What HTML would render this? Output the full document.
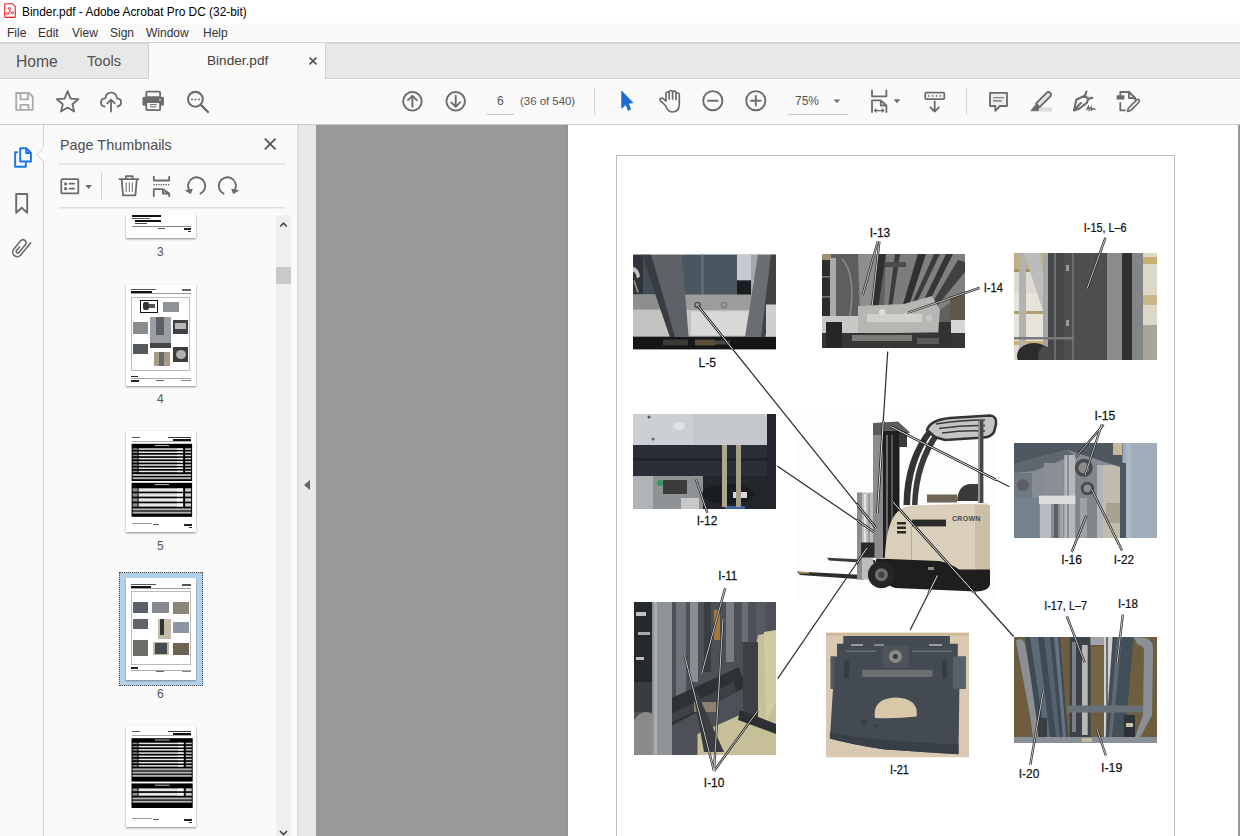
<!DOCTYPE html>
<html><head><meta charset="utf-8">
<style>
*{margin:0;padding:0;box-sizing:border-box}
html,body{width:1240px;height:836px;overflow:hidden;background:#fafafa;font-family:"Liberation Sans",sans-serif}
.a{position:absolute}
.t{position:absolute;white-space:nowrap;line-height:1}
svg{position:absolute;overflow:visible}
.tb{background:#000;background-image:repeating-linear-gradient(180deg,transparent 0,transparent 2px,rgba(255,255,255,.55) 2px,rgba(255,255,255,.55) 3px);border:1.5px solid #000}
</style></head><body>
<!-- title bar -->
<div class="a" style="left:0;top:0;width:1240px;height:23px;background:#fff"></div>
<svg style="left:4px;top:3px" width="12" height="15" viewBox="0 0 12 15"><path d="M0.7 1.3 Q0.7 0.7 1.3 0.7 H8.3 L11.3 3.7 V13.8 Q11.3 14.4 10.7 14.4 H1.3 Q0.7 14.4 0.7 13.8 Z" fill="#fff" stroke="#f21c1c" stroke-width="1.1"/><g fill="none" stroke="#f21c1c" stroke-width="0.95"><circle cx="5.6" cy="5.6" r="1.1"/><circle cx="3.4" cy="10.6" r="1.1"/><circle cx="8.5" cy="9.8" r="1.1"/><path d="M5.6 6.7 L5.7 8.6 L4.3 9.9 M5.7 8.6 L7.5 9.5"/></g></svg>
<div class="t" style="left:22px;top:7px;font-size:11.9px;color:#000">Binder.pdf - Adobe Acrobat Pro DC (32-bit)</div>
<!-- menu bar -->
<div class="a" style="left:0;top:23px;width:1240px;height:19px;background:#fafafa"></div>
<div class="t" style="left:7px;top:27px;font-size:12px;color:#333">File</div>
<div class="t" style="left:38px;top:27px;font-size:12px;color:#333">Edit</div>
<div class="t" style="left:72px;top:27px;font-size:12px;color:#333">View</div>
<div class="t" style="left:110px;top:27px;font-size:12px;color:#333">Sign</div>
<div class="t" style="left:146px;top:27px;font-size:12px;color:#333">Window</div>
<div class="t" style="left:203px;top:27px;font-size:12px;color:#333">Help</div>
<!-- tab bar -->
<div class="a" style="left:0;top:42px;width:1240px;height:37px;background:#e8e8e8;border-top:2px solid #d4d4d4;border-bottom:1px solid #cfcfcf"></div>
<div class="a" style="left:148px;top:43px;width:178px;height:36px;background:#fafafa;border-left:1px solid #d0d0d0;border-right:1px solid #d0d0d0"></div>
<div class="t" style="left:16px;top:53.5px;font-size:15.6px;color:#505050">Home</div>
<div class="t" style="left:87px;top:53.5px;font-size:14.6px;color:#505050">Tools</div>
<div class="t" style="left:207px;top:54px;font-size:13.6px;color:#404040">Binder.pdf</div>
<svg style="left:308.5px;top:57px" width="8" height="8" viewBox="0 0 8 8"><path d="M0.6 0.6L7.4 7.4M7.4 0.6L0.6 7.4" stroke="#555" stroke-width="1.7"/></svg>
<!-- toolbar -->
<div class="a" style="left:0;top:79px;width:1240px;height:46px;background:#fafafa;border-bottom:1px solid #cccccc"></div>


<!-- toolbar icons -->
<svg style="left:0;top:0" width="1240" height="125" viewBox="0 0 1240 125">
 <g fill="none" stroke="#6b6b6b" stroke-width="1.8" stroke-linejoin="round" stroke-linecap="round">
  <!-- save -->
  <path d="M16.2 93 H29 L32.8 96.8 V109.8 H16.2 Z M20.5 93 V99.3 H28 V93 M20.5 109.8 V104.8 H28.5 V109.8" stroke="#ababab"/>
  <!-- star -->
  <path d="M67.6 91.2 L70.6 98.6 L78.3 99.2 L72.4 104.3 L74.2 111.5 L67.6 107.6 L61 111.5 L62.8 104.3 L56.9 99.2 L64.6 98.6 Z"/>
  <!-- cloud -->
  <path d="M104.5 106.5 Q100.8 105.8 100.9 102.2 Q101.1 98.4 105.3 98.3 Q106 92.5 111.2 92.6 Q116.3 92.7 117 98.3 Q121 98.5 121.1 102.3 Q121 106 117.6 106.5"/>
  <path d="M111 111.5 V99.8 M107.3 103.4 L111 99.6 L114.7 103.4"/>
  <!-- search -->
  <circle cx="195.4" cy="99.3" r="7.4" stroke-width="2.1"/>
  <path d="M200.8 104.8 L208 112" stroke-width="2.4"/>
 </g>
 <g fill="#6b6b6b">
  <circle cx="192" cy="99.4" r="1"/><circle cx="195.5" cy="99.4" r="1"/><circle cx="199" cy="99.4" r="1"/>
  <!-- printer -->
  <rect x="142.5" y="96.8" width="21.4" height="9" rx="1.5"/>
 </g>
 <g fill="#fafafa" stroke="#6b6b6b" stroke-width="1.8" stroke-linejoin="round">
  <rect x="146.3" y="91.6" width="13.8" height="5.6" rx="1"/>
  <rect x="146.3" y="102.2" width="13.8" height="8" rx="1"/>
 </g>
 <path d="M150 104.6 H156.5 M150 106.8 H156.5" stroke="#6b6b6b" stroke-width="1"/>
 <rect x="159" y="99" width="2" height="1.6" fill="#bbb"/>
 <!-- nav circles -->
 <g fill="none" stroke="#6b6b6b" stroke-width="1.9" stroke-linecap="round" stroke-linejoin="round">
  <circle cx="412.4" cy="101.3" r="9.3"/>
  <path d="M412.4 106.8 V95.8 M408 100.2 L412.4 95.8 L416.8 100.2"/>
  <circle cx="455.7" cy="101.3" r="9.3"/>
  <path d="M455.7 95.8 V106.8 M451.3 102.4 L455.7 106.8 L460.1 102.4"/>
  <circle cx="712.8" cy="100.7" r="9.6"/>
  <path d="M708 100.7 H717.6"/>
  <circle cx="755.8" cy="100.7" r="9.6"/>
  <path d="M751 100.7 H760.6 M755.8 95.9 V105.5"/>
 </g>
 <!-- page field -->
 <path d="M486.7 114.3 H514.2" stroke="#c4c4c4" stroke-width="1"/>
 <path d="M594.6 88 V114.6" stroke="#d0d0d0" stroke-width="1"/>
 <path d="M788 114.3 H848.5" stroke="#c4c4c4" stroke-width="1"/>
 <path d="M833.6 99.4 H840.2 L836.9 103 Z" fill="#6b6b6b"/>
 <path d="M893.7 99.3 H900.3 L897 103.2 Z" fill="#6b6b6b"/>
 <path d="M966.5 88 V114.6" stroke="#d0d0d0" stroke-width="1"/>
 <!-- arrow cursor -->
 <path d="M621.7 91.1 L633 102.7 L628.4 103.3 L630.6 109.3 L628.4 110.5 L625.9 104.6 L621.7 108.2 Z" fill="#1b6ccf" stroke="#1b6ccf" stroke-width="0.8" stroke-linejoin="round"/>
 <!-- hand -->
 <path d="M665.5 105.5 L660.5 100.8 Q659.2 99.2 660.8 98.3 Q662.1 97.7 663.5 98.9 L666 101 V93.7 Q666 92 667.6 92 Q669.2 92 669.2 93.7 V99 V92.2 Q669.2 90.5 670.9 90.5 Q672.6 90.5 672.6 92.2 V99 V92.8 Q672.6 91.2 674.3 91.2 Q676 91.2 676 92.8 V99.5 V94.5 Q676 93 677.6 93 Q679.3 93 679.3 94.5 V104 Q679.3 112 672 112 Q668 112 665.5 105.5 Z" fill="none" stroke="#6b6b6b" stroke-width="1.7" stroke-linejoin="round"/>
 <!-- fit page -->
 <g fill="none" stroke="#6b6b6b" stroke-width="1.8" stroke-linecap="round" stroke-linejoin="round">
  <path d="M872 90.5 V96.3 H886.4 V90.5"/>
  <path d="M872 112 V100.3 H880.8 L886.4 105.5 V112 M880.8 100.3 V105.5 H886.4"/>
 </g>
 <path d="M874.5 110.6 H883.8 M876.5 108.8 L874.5 110.6 L876.5 112.4 M881.8 108.8 L883.8 110.6 L881.8 112.4" fill="none" stroke="#6b6b6b" stroke-width="1.2"/>
 <!-- scroll mode -->
 <rect x="925.3" y="92.6" width="19" height="6.6" rx="1.2" fill="none" stroke="#6b6b6b" stroke-width="1.8"/>
 <g fill="#6b6b6b"><circle cx="928.7" cy="95.9" r="0.9"/><circle cx="932.6" cy="95.9" r="0.9"/><circle cx="936.5" cy="95.9" r="0.9"/><circle cx="940.4" cy="95.9" r="0.9"/></g>
 <path d="M934.7 101.5 V111.5 M930.5 107.3 L934.7 111.5 L938.9 107.3" fill="none" stroke="#6b6b6b" stroke-width="1.8" stroke-linecap="round" stroke-linejoin="round"/>
 <!-- comment -->
 <path d="M990 92.8 H1007 V106 H1000 L995.3 110.8 V106 H990 Z" fill="#eeeeee" stroke="#6b6b6b" stroke-width="1.8" stroke-linejoin="round"/>
 <path d="M993 97.7 H1004 M993 100.9 H1002" stroke="#6b6b6b" stroke-width="1.1"/>
 <!-- highlighter -->
 <rect x="1036.8" y="107.2" width="15.2" height="4.5" fill="#dddddd"/>
 <path d="M1036 103.5 L1046.6 92.9 Q1048.4 91.1 1050.2 92.9 Q1052 94.7 1050.2 96.5 L1039.6 107.1 Z" fill="#e6e6e6" stroke="#6b6b6b" stroke-width="1.8" stroke-linejoin="round"/>
 <path d="M1036.5 104 L1031 110.7 H1038 L1039 107" fill="#6b6b6b" stroke="#6b6b6b" stroke-width="1" stroke-linejoin="round"/>
 <!-- pen -->
 <path d="M1085.5 93.5 L1093.5 98 L1088.5 100.5 Z" fill="#dddddd"/>
 <path d="M1074 110.5 L1076.3 99.8 L1084.7 95.8 L1088.2 99 L1086.8 102.8 L1079.5 108.5 Z" fill="none" stroke="#6b6b6b" stroke-width="2.1" stroke-linejoin="round"/>
 <path d="M1084.7 95.8 L1086.5 91.5 M1088.2 99 L1092.5 97.8 M1074.5 110 L1080.2 103.5" fill="none" stroke="#6b6b6b" stroke-width="2" stroke-linecap="round"/>
 <circle cx="1081" cy="103" r="1.1" fill="#6b6b6b"/>
 <path d="M1086.5 110.2 L1088.5 106.5 L1089.2 110 L1091 107 L1091.5 110 L1093 108.5 L1095.5 109.5" fill="none" stroke="#6b6b6b" stroke-width="1.4"/>
 <!-- edit pdf -->
 <g fill="none" stroke="#6b6b6b" stroke-width="1.8" stroke-linejoin="round" stroke-linecap="round">
  <path d="M1120.3 95 V92 H1129 L1135.2 98 V99.5 M1129 92 V98 H1135.2"/>
  <path d="M1120.3 103 V110.3 H1125"/>
 </g>
 <rect x="1116.6" y="95.3" width="7.8" height="4.2" fill="#6b6b6b"/>
 <path d="M1127.5 111.5 L1128.3 108.2 L1136.6 99.9 Q1137.8 98.7 1139 99.9 Q1140.2 101.1 1139 102.3 L1130.7 110.6 Z" fill="#eeeeee" stroke="#6b6b6b" stroke-width="1.6" stroke-linejoin="round"/>
</svg>
<div class="t" style="left:497px;top:95px;font-size:12px;color:#555">6</div>
<div class="t" style="left:520px;top:95.5px;font-size:11.4px;color:#555">(36 of 540)</div>
<div class="t" style="left:795px;top:95px;font-size:12px;color:#555">75%</div>

<!-- nav rail -->
<div class="a" style="left:0;top:125px;width:44px;height:711px;background:#fafafa"></div>
<!-- thumbnails panel -->
<div class="a" style="left:44px;top:125px;width:253px;height:711px;background:#fafafa"></div>
<div class="a" style="left:297px;top:125px;width:2px;height:711px;background:#dcdcdc"></div>
<div class="a" style="left:299px;top:125px;width:17px;height:711px;background:#e9e9e9"></div>
<svg style="left:304px;top:480px" width="6" height="10" viewBox="0 0 6 10"><path d="M6 0 L0 5 L6 10Z" fill="#666"/></svg>

<!-- nav rail icons -->
<svg style="left:0;top:125px" width="316" height="100" viewBox="0 125 316 100">
 <path d="M43.5 125 V147.5 L36.8 154.7 L43.5 161.8 V836" fill="none" stroke="#d2d2d2" stroke-width="1"/>
 <g fill="none" stroke="#1473e6" stroke-width="1.9" stroke-linejoin="round" stroke-linecap="round">
  <path d="M17.2 152.2 H15.2 V166.8 H25.8 V163"/>
  <path d="M20.2 148.2 H26.2 L30.9 152.8 V161.5 H20.2 Z M26.2 148.2 V153 H30.9"/>
 </g>
 <path d="M16.2 194 H27.2 V212.8 L21.7 207.8 L16.2 212.8 Z" fill="none" stroke="#6b6b6b" stroke-width="1.9" stroke-linejoin="round"/>
 <!-- header -->
 <path d="M264.8 138.6 L275.6 149.4 M275.6 138.6 L264.8 149.4" stroke="#555" stroke-width="1.8"/>
 <path d="M59 164 H285 M59 207.8 H285" stroke="#d4d4d4" stroke-width="1"/>
 <!-- panel tools -->
 <g fill="none" stroke="#6b6b6b" stroke-width="1.8" stroke-linejoin="round" stroke-linecap="round">
  <rect x="61.3" y="179.2" width="17" height="14.2" rx="1"/>
  <path d="M69.6 183.7 H74.1 M69.6 188.7 H74.1"/>
  <path d="M119.3 179.1 H138.5 M126 179 V176.2 H132.6 V179 M121.6 179.2 L123 195.4 H135.4 L136.8 179.2"/>
  <path d="M153.8 176.6 V180.5 H169.2 V176.6"/>
  <path d="M153.8 196.2 V189.2 H162.9 L169.2 193.5 V196.2 M162.9 189.2 V193.5 H169.2"/>
  <path d="M200.4 193.6 A8.6 8.6 0 1 0 188.8 189.5" stroke-width="1.9"/>
  <path d="M223.6 193.6 A8.6 8.6 0 1 1 235.2 189.5" stroke-width="1.9"/>
 </g>
 <path d="M126.2 182.5 V192 M129.3 182.5 V192 M132.3 182.5 V192" stroke="#6b6b6b" stroke-width="1"/>
 <g fill="#6b6b6b">
  <circle cx="65.6" cy="183.8" r="1.6"/><circle cx="65.6" cy="188.7" r="1.6"/>
  <path d="M85.4 184.9 H91.9 L88.65 188.9 Z"/>
  <rect x="153.4" y="184" width="1.4" height="1.4"/><rect x="155.8" y="184" width="1.4" height="1.4"/><rect x="158.2" y="184" width="1.4" height="1.4"/><rect x="160.6" y="184" width="1.4" height="1.4"/><rect x="163" y="184" width="1.4" height="1.4"/><rect x="165.4" y="184" width="1.4" height="1.4"/><rect x="167.8" y="184" width="1.4" height="1.4"/>
  <path d="M184.7 190.2 L192.8 188.8 L190.8 194.3 Z"/>
  <path d="M239.3 190.2 L231.2 188.8 L233.2 194.3 Z"/>
 </g>
 <path d="M101.6 172.2 V199.4" stroke="#d0d0d0" stroke-width="1"/>
</svg>
<svg style="left:0;top:230px" width="44" height="40" viewBox="0 230 44 40">
 <g transform="translate(22 246.3) rotate(-51) scale(0.84) translate(-21.5 -248)" fill="none" stroke="#6b6b6b" stroke-width="1.9" stroke-linecap="round">
  <path d="M19 246.2 H13.5 A1.8 1.8 0 0 0 13.5 249.8 H25.5 A3.6 3.6 0 0 0 25.5 242.6 H12.5 A5.4 5.4 0 0 0 12.5 253.4 H31"/>
 </g>
</svg>
<div class="t" style="left:60px;top:138px;font-size:14.4px;color:#4b4b4b">Page Thumbnails</div>


<!-- thumbnails -->
<div class="a" style="left:44px;top:215px;width:232px;height:621px;overflow:hidden">
 <!-- page 3 (clipped) -->
 <div class="a" style="left:82px;top:-78px;width:70px;height:101px;background:#fff;box-shadow:0 1px 2px rgba(0,0,0,.45)">
  <div class="a" style="left:6px;top:76px;width:25px;height:1px;background:#333"></div>
  <div class="a" style="left:6px;top:78px;width:29px;height:2px;background:#111"></div>
  <div class="a" style="left:6px;top:81px;width:18px;height:1px;background:#555"></div>
  <div class="a" style="left:9px;top:83px;width:26px;height:2px;background:#111"></div>
  <div class="a" style="left:9px;top:86px;width:12px;height:1px;background:#444"></div>
  <div class="a" style="left:6px;top:89px;width:59px;height:1px;background:#888"></div>
  <div class="a" style="left:32px;top:91px;width:7px;height:1px;background:#555"></div>
  <div class="a" style="left:58px;top:91px;width:7px;height:2px;background:#222"></div>
  <div class="a" style="left:62px;top:94px;width:3px;height:1px;background:#333"></div>
 </div>
 <!-- page 4 -->
 <div class="a" style="left:82px;top:69.6px;width:70px;height:101px;background:#fff;box-shadow:0 1px 2px rgba(0,0,0,.45)">
  <div class="a" style="left:5px;top:4.6px;width:25px;height:1px;background:#555"></div>
  <div class="a" style="left:5px;top:6.6px;width:21px;height:1.5px;background:#111"></div>
  <div class="a" style="left:56px;top:4.6px;width:9px;height:2px;background:#666"></div>
  <div class="a" style="left:5px;top:8.8px;width:60px;height:1px;background:#999"></div>
  <div class="a" style="left:5.2px;top:12.5px;width:59.2px;height:73.7px;border:1px solid #bbb"></div>
  <div class="a" style="left:13.7px;top:15.1px;width:18.5px;height:13.2px;background:#fff;border:1.6px solid #111"><div class="a" style="left:2px;top:1.5px;width:6px;height:8px;background:#333;border-radius:2px"></div><div class="a" style="left:8px;top:3px;width:6px;height:4px;background:#555"></div></div>
  <div class="a" style="left:36.8px;top:17.8px;width:16.4px;height:9.8px;background:#8d949a"></div>
  <div class="a" style="left:6.5px;top:37.5px;width:15.8px;height:11.9px;background:#8a8c8e"></div>
  <div class="a" style="left:23.6px;top:32.2px;width:21px;height:31.6px;background:#9a9ea2"><div class="a" style="left:6px;top:0;width:8px;height:18px;background:#5a6066"></div><div class="a" style="left:0;top:26px;width:21px;height:5.6px;background:#444"></div></div>
  <div class="a" style="left:46.6px;top:35.5px;width:15.8px;height:13.9px;background:#3e4246"><div class="a" style="left:2px;top:3px;width:11px;height:6px;background:#b8b8b8"></div></div>
  <div class="a" style="left:6.5px;top:59.2px;width:15.8px;height:10.5px;background:#54585c"></div>
  <div class="a" style="left:28.2px;top:67.8px;width:15.8px;height:13.8px;background:#a89c86"><div class="a" style="left:5px;top:0;width:5px;height:13.8px;background:#6a6a6a"></div></div>
  <div class="a" style="left:46.6px;top:62.4px;width:15.8px;height:15.2px;background:#3c3c3c"><div class="a" style="left:3px;top:3px;width:10px;height:9px;border-radius:50%;background:#b0b0b0"></div></div>
  <div class="a" style="left:5px;top:91px;width:7px;height:1.5px;background:#222"></div>
  <div class="a" style="left:5px;top:93.5px;width:60px;height:1px;background:#aaa"></div>
  <div class="a" style="left:5px;top:95px;width:8px;height:2px;background:#222"></div>
  <div class="a" style="left:30px;top:95px;width:8px;height:1px;background:#666"></div>
  <div class="a" style="left:55px;top:95px;width:10px;height:1px;background:#888"></div>
 </div>
 <!-- page 5 -->
 <div class="a" style="left:82px;top:216px;width:70px;height:101px;background:#fff;box-shadow:0 1px 2px rgba(0,0,0,.45)">
  <div class="a" style="left:6px;top:6px;width:8px;height:1px;background:#555"></div>
  <div class="a" style="left:42px;top:6px;width:23px;height:1px;background:#333"></div>
  <div class="a" style="left:47px;top:8px;width:18px;height:2px;background:#111"></div>
  <div class="a" style="left:6px;top:10px;width:59px;height:1px;background:#aaa"></div>
  <div class="a" style="left:6px;top:92px;width:20px;height:1px;background:#999"></div>
  <div class="a" style="left:27px;top:93px;width:6px;height:1px;background:#555"></div>
  <div class="a" style="left:58px;top:93px;width:8px;height:2px;background:#222"></div>
  <div class="a" style="left:63px;top:96px;width:3px;height:1px;background:#333"></div>
 </div>
 <!-- page 6 selected -->
 <div class="a" style="left:75px;top:357px;width:84px;height:114px;background:#b3d1e8;border:1px dotted #444"></div>
 <div class="a" style="left:82px;top:363px;width:70px;height:102px;background:#fff;box-shadow:0 1px 2px rgba(0,0,0,.35)">
  <div class="a" style="left:5px;top:6px;width:25px;height:1px;background:#555"></div>
  <div class="a" style="left:5px;top:8px;width:20px;height:1.5px;background:#111"></div>
  <div class="a" style="left:56px;top:6px;width:9px;height:1.5px;background:#555"></div>
  <div class="a" style="left:5px;top:10px;width:60px;height:1px;background:#999"></div>
  <div class="a" style="left:5px;top:12.6px;width:59.5px;height:74.5px;border:1px solid #bbb"></div>
  <div class="a" style="left:6.6px;top:23.8px;width:15.6px;height:10.9px;background:#5a6068"></div>
  <div class="a" style="left:25.9px;top:23.8px;width:17px;height:10.9px;background:#858a90"></div>
  <div class="a" style="left:46.8px;top:23.8px;width:15.9px;height:12px;background:#88867a"></div>
  <div class="a" style="left:6.6px;top:40.6px;width:15.6px;height:10.9px;background:#5e646a"></div>
  <div class="a" style="left:31.7px;top:40.6px;width:13.4px;height:20px;background:#c4bca8"></div>
  <div class="a" style="left:34px;top:40.6px;width:4px;height:16px;background:#333"></div>
  <div class="a" style="left:46.8px;top:44px;width:15.9px;height:10.8px;background:#8a96a2"></div>
  <div class="a" style="left:6.6px;top:61.5px;width:15.6px;height:16.8px;background:#6c6e68"></div>
  <div class="a" style="left:27.2px;top:64px;width:15.8px;height:13.4px;background:#c8b89a"><div class="a" style="left:2px;top:1px;width:12px;height:11px;background:#434a54"></div></div>
  <div class="a" style="left:46.8px;top:64.9px;width:15.9px;height:12.5px;background:#6e6250"></div>
  <div class="a" style="left:5px;top:89px;width:7px;height:2px;background:#222"></div>
  <div class="a" style="left:5px;top:92px;width:60px;height:1px;background:#aaa"></div>
  <div class="a" style="left:30px;top:93px;width:8px;height:1px;background:#666"></div>
  <div class="a" style="left:56px;top:93px;width:9px;height:1px;background:#888"></div>
 </div>
 <!-- page 7 -->
 <div class="a" style="left:82px;top:511px;width:70px;height:101px;background:#fff;box-shadow:0 1px 2px rgba(0,0,0,.45)">
  <div class="a" style="left:6px;top:5px;width:8px;height:1px;background:#555"></div>
  <div class="a" style="left:42px;top:5px;width:23px;height:1px;background:#333"></div>
  <div class="a" style="left:47px;top:7px;width:18px;height:2px;background:#111"></div>
  <div class="a" style="left:6px;top:9px;width:59px;height:1px;background:#aaa"></div>
  <div class="a" style="left:6px;top:92px;width:20px;height:1px;background:#999"></div>
  <div class="a" style="left:27px;top:93px;width:6px;height:1px;background:#555"></div>
  <div class="a" style="left:58px;top:93px;width:8px;height:2px;background:#222"></div>
  <div class="a" style="left:63px;top:96px;width:3px;height:1px;background:#333"></div>
 </div>
</div>
<!-- TH START --><svg style="left:0;top:0" width="300" height="836" viewBox="0 0 300 836"><rect x="131.6" y="443.8" width="60.5" height="37.2" fill="#000"/><rect x="154.6" y="445.1" width="14.5" height="1" fill="#bbb"/><rect x="132.6" y="448.3" width="5.0" height="1.5" fill="#fff" opacity="0.55"/><rect x="138.6" y="448.3" width="44.5" height="1.5" fill="#fff" opacity="0.9"/><rect x="177.1" y="448.3" width="6.0" height="1.5" fill="#fff" opacity="0.6"/><rect x="185.1" y="448.3" width="6.0" height="1.5" fill="#fff" opacity="0.8"/><rect x="132.6" y="451.5" width="5.0" height="1.5" fill="#fff" opacity="0.55"/><rect x="138.6" y="451.5" width="44.5" height="1.5" fill="#fff" opacity="0.9"/><rect x="177.1" y="451.5" width="6.0" height="1.5" fill="#fff" opacity="0.6"/><rect x="185.1" y="451.5" width="6.0" height="1.5" fill="#fff" opacity="0.8"/><rect x="132.6" y="454.7" width="5.0" height="1.5" fill="#fff" opacity="0.55"/><rect x="138.6" y="454.7" width="44.5" height="1.5" fill="#fff" opacity="0.9"/><rect x="177.1" y="454.7" width="6.0" height="1.5" fill="#fff" opacity="0.6"/><rect x="185.1" y="454.7" width="6.0" height="1.5" fill="#fff" opacity="0.8"/><rect x="132.6" y="457.9" width="5.0" height="1.5" fill="#fff" opacity="0.55"/><rect x="138.6" y="457.9" width="44.5" height="1.5" fill="#fff" opacity="0.9"/><rect x="177.1" y="457.9" width="6.0" height="1.5" fill="#fff" opacity="0.6"/><rect x="185.1" y="457.9" width="6.0" height="1.5" fill="#fff" opacity="0.8"/><rect x="132.6" y="461.1" width="5.0" height="1.5" fill="#fff" opacity="0.55"/><rect x="138.6" y="461.1" width="44.5" height="1.5" fill="#fff" opacity="0.9"/><rect x="177.1" y="461.1" width="6.0" height="1.5" fill="#fff" opacity="0.6"/><rect x="185.1" y="461.1" width="6.0" height="1.5" fill="#fff" opacity="0.8"/><rect x="132.6" y="464.3" width="5.0" height="1.5" fill="#fff" opacity="0.55"/><rect x="138.6" y="464.3" width="44.5" height="1.5" fill="#fff" opacity="0.9"/><rect x="177.1" y="464.3" width="6.0" height="1.5" fill="#fff" opacity="0.6"/><rect x="185.1" y="464.3" width="6.0" height="1.5" fill="#fff" opacity="0.8"/><rect x="132.6" y="467.5" width="5.0" height="1.5" fill="#fff" opacity="0.55"/><rect x="138.6" y="467.5" width="44.5" height="1.5" fill="#fff" opacity="0.9"/><rect x="177.1" y="467.5" width="6.0" height="1.5" fill="#fff" opacity="0.6"/><rect x="185.1" y="467.5" width="6.0" height="1.5" fill="#fff" opacity="0.8"/><rect x="132.6" y="470.7" width="5.0" height="1.5" fill="#fff" opacity="0.55"/><rect x="138.6" y="470.7" width="44.5" height="1.5" fill="#fff" opacity="0.9"/><rect x="177.1" y="470.7" width="6.0" height="1.5" fill="#fff" opacity="0.6"/><rect x="185.1" y="470.7" width="6.0" height="1.5" fill="#fff" opacity="0.8"/><rect x="132.6" y="474.0" width="58.5" height="2" fill="#fff" opacity="0.7"/><rect x="132.6" y="477.2" width="58.5" height="2" fill="#fff" opacity="0.7"/><rect x="131.6" y="482.8" width="60.5" height="34" fill="#000"/><rect x="154.6" y="484.1" width="14.5" height="1" fill="#bbb"/><rect x="132.6" y="488.3" width="5.0" height="3.3" fill="#fff" opacity="0.55"/><rect x="138.6" y="488.3" width="44.5" height="3.3" fill="#fff" opacity="0.9"/><rect x="177.1" y="488.3" width="6.0" height="3.3" fill="#fff" opacity="0.6"/><rect x="185.1" y="488.3" width="6.0" height="3.3" fill="#fff" opacity="0.8"/><rect x="132.6" y="493.3" width="5.0" height="3.3" fill="#fff" opacity="0.55"/><rect x="138.6" y="493.3" width="44.5" height="3.3" fill="#fff" opacity="0.9"/><rect x="177.1" y="493.3" width="6.0" height="3.3" fill="#fff" opacity="0.6"/><rect x="185.1" y="493.3" width="6.0" height="3.3" fill="#fff" opacity="0.8"/><rect x="132.6" y="498.3" width="5.0" height="3.3" fill="#fff" opacity="0.55"/><rect x="138.6" y="498.3" width="44.5" height="3.3" fill="#fff" opacity="0.9"/><rect x="177.1" y="498.3" width="6.0" height="3.3" fill="#fff" opacity="0.6"/><rect x="185.1" y="498.3" width="6.0" height="3.3" fill="#fff" opacity="0.8"/><rect x="132.6" y="503.3" width="5.0" height="3.3" fill="#fff" opacity="0.55"/><rect x="138.6" y="503.3" width="44.5" height="3.3" fill="#fff" opacity="0.9"/><rect x="177.1" y="503.3" width="6.0" height="3.3" fill="#fff" opacity="0.6"/><rect x="185.1" y="503.3" width="6.0" height="3.3" fill="#fff" opacity="0.8"/><rect x="132.6" y="508.4" width="58.5" height="2" fill="#fff" opacity="0.7"/><rect x="132.6" y="511.6" width="58.5" height="2" fill="#fff" opacity="0.7"/><rect x="131.5" y="738.2" width="61.2" height="43.4" fill="#000"/><rect x="154.8" y="739.5" width="14.7" height="1" fill="#bbb"/><rect x="132.5" y="742.7" width="5.0" height="1.5" fill="#fff" opacity="0.55"/><rect x="138.5" y="742.7" width="45.2" height="1.5" fill="#fff" opacity="0.9"/><rect x="177.7" y="742.7" width="6.0" height="1.5" fill="#fff" opacity="0.6"/><rect x="185.7" y="742.7" width="6.0" height="1.5" fill="#fff" opacity="0.8"/><rect x="132.5" y="745.9" width="5.0" height="1.5" fill="#fff" opacity="0.55"/><rect x="138.5" y="745.9" width="45.2" height="1.5" fill="#fff" opacity="0.9"/><rect x="177.7" y="745.9" width="6.0" height="1.5" fill="#fff" opacity="0.6"/><rect x="185.7" y="745.9" width="6.0" height="1.5" fill="#fff" opacity="0.8"/><rect x="132.5" y="749.1" width="5.0" height="1.5" fill="#fff" opacity="0.55"/><rect x="138.5" y="749.1" width="45.2" height="1.5" fill="#fff" opacity="0.9"/><rect x="177.7" y="749.1" width="6.0" height="1.5" fill="#fff" opacity="0.6"/><rect x="185.7" y="749.1" width="6.0" height="1.5" fill="#fff" opacity="0.8"/><rect x="132.5" y="752.3" width="5.0" height="1.5" fill="#fff" opacity="0.55"/><rect x="138.5" y="752.3" width="45.2" height="1.5" fill="#fff" opacity="0.9"/><rect x="177.7" y="752.3" width="6.0" height="1.5" fill="#fff" opacity="0.6"/><rect x="185.7" y="752.3" width="6.0" height="1.5" fill="#fff" opacity="0.8"/><rect x="132.5" y="755.5" width="5.0" height="1.5" fill="#fff" opacity="0.55"/><rect x="138.5" y="755.5" width="45.2" height="1.5" fill="#fff" opacity="0.9"/><rect x="177.7" y="755.5" width="6.0" height="1.5" fill="#fff" opacity="0.6"/><rect x="185.7" y="755.5" width="6.0" height="1.5" fill="#fff" opacity="0.8"/><rect x="132.5" y="758.7" width="5.0" height="1.5" fill="#fff" opacity="0.55"/><rect x="138.5" y="758.7" width="45.2" height="1.5" fill="#fff" opacity="0.9"/><rect x="177.7" y="758.7" width="6.0" height="1.5" fill="#fff" opacity="0.6"/><rect x="185.7" y="758.7" width="6.0" height="1.5" fill="#fff" opacity="0.8"/><rect x="132.5" y="761.9" width="5.0" height="1.5" fill="#fff" opacity="0.55"/><rect x="138.5" y="761.9" width="45.2" height="1.5" fill="#fff" opacity="0.9"/><rect x="177.7" y="761.9" width="6.0" height="1.5" fill="#fff" opacity="0.6"/><rect x="185.7" y="761.9" width="6.0" height="1.5" fill="#fff" opacity="0.8"/><rect x="132.5" y="765.1" width="5.0" height="1.5" fill="#fff" opacity="0.55"/><rect x="138.5" y="765.1" width="45.2" height="1.5" fill="#fff" opacity="0.9"/><rect x="177.7" y="765.1" width="6.0" height="1.5" fill="#fff" opacity="0.6"/><rect x="185.7" y="765.1" width="6.0" height="1.5" fill="#fff" opacity="0.8"/><rect x="132.5" y="768.4" width="59.2" height="2" fill="#fff" opacity="0.7"/><rect x="132.5" y="771.6" width="59.2" height="2" fill="#fff" opacity="0.7"/><rect x="132.5" y="774.8" width="59.2" height="2" fill="#fff" opacity="0.7"/><rect x="131.5" y="783.4" width="61.2" height="24.6" fill="#000"/><rect x="154.8" y="784.6999999999999" width="14.7" height="1" fill="#bbb"/><rect x="132.5" y="788.4" width="5.0" height="2.8" fill="#fff" opacity="0.55"/><rect x="138.5" y="788.4" width="45.2" height="2.8" fill="#fff" opacity="0.9"/><rect x="177.7" y="788.4" width="6.0" height="2.8" fill="#fff" opacity="0.6"/><rect x="185.7" y="788.4" width="6.0" height="2.8" fill="#fff" opacity="0.8"/><rect x="132.5" y="792.9" width="5.0" height="2.8" fill="#fff" opacity="0.55"/><rect x="138.5" y="792.9" width="45.2" height="2.8" fill="#fff" opacity="0.9"/><rect x="177.7" y="792.9" width="6.0" height="2.8" fill="#fff" opacity="0.6"/><rect x="185.7" y="792.9" width="6.0" height="2.8" fill="#fff" opacity="0.8"/><rect x="132.5" y="797.5" width="59.2" height="2" fill="#fff" opacity="0.7"/><rect x="132.5" y="800.7" width="59.2" height="2" fill="#fff" opacity="0.7"/></svg><!-- TH END -->
<div class="t" style="left:157px;top:246px;font-size:12px;color:#555">3</div>
<div class="t" style="left:157px;top:393px;font-size:12px;color:#555">4</div>
<div class="t" style="left:157px;top:540px;font-size:12px;color:#555">5</div>
<div class="t" style="left:157px;top:688px;font-size:12px;color:#555">6</div>
<!-- scrollbar -->
<div class="a" style="left:276px;top:215px;width:15px;height:621px;background:#efefef"></div>
<div class="a" style="left:276px;top:267px;width:15px;height:17px;background:#c9c9c9"></div>
<svg style="left:276px;top:215px" width="15" height="621" viewBox="0 0 15 621"><path d="M4.2 11.5 L7.5 8.2 L10.8 11.5" fill="none" stroke="#444" stroke-width="1.6"/><path d="M4 616 L7.5 619.5 L11 616" fill="none" stroke="#444" stroke-width="1.6"/></svg>

<!-- doc area -->
<div class="a" style="left:316px;top:125px;width:924px;height:711px;background:#999"></div>
<div class="a" style="left:566px;top:125px;width:2px;height:711px;background:#929292"></div>
<div class="a" style="left:568px;top:125px;width:670px;height:711px;background:#fff"></div>
<div class="a" style="left:616px;top:155px;width:559px;height:700px;border:1.5px solid #bbb"></div>

<!-- DOC START --><svg style="left:0;top:0" width="1240" height="836" viewBox="0 0 1240 836">
<defs><clipPath id="phc"><rect x="633" y="254.5" width="143" height="95"/><rect x="822" y="254" width="143" height="94"/><rect x="1014" y="253" width="143" height="107"/><rect x="633" y="414" width="143" height="95"/><rect x="1014" y="443" width="143" height="95"/><rect x="634" y="602" width="142" height="153"/><rect x="826" y="632.5" width="143" height="125"/><rect x="1014" y="637" width="143" height="106"/><rect x="857" y="421" width="53" height="160"/><rect x="903" y="416" width="93" height="90"/><rect x="884" y="503" width="106" height="90"/></clipPath></defs>

<rect x="795" y="410" width="200" height="190" fill="#fdfdfc"/>
<!-- forks -->
<polygon points="797,571.5 864,575 864,579.5 800,575" fill="#2e2e2e"/>
<polygon points="827,557.7 875,560 875,563.5 829,560.5" fill="#3a3a3a"/>
<rect x="799" y="572" width="10" height="1.5" fill="#b89a50"/>
<!-- carriage backrest -->
<rect x="857" y="492.5" width="16" height="87" fill="#bdbdbd"/>
<rect x="857" y="492.5" width="5" height="87" fill="#8d8d8d"/>
<rect x="864" y="494" width="2" height="50" fill="#e2e2e2"/><rect x="868" y="494" width="2" height="50" fill="#9a9a9a"/>
<!-- mast -->
<rect x="873" y="423" width="10" height="135" fill="#8c8c8c"/>
<polygon points="873,423 898,421.4 910,432.6 905,435 873,435" fill="#5c5c5c"/>
<rect x="883" y="431" width="16.5" height="127" fill="#1f1f1f"/>
<rect x="886" y="435" width="2" height="110" fill="#6a6a6a"/><rect x="891" y="435" width="2" height="110" fill="#555"/>
<rect x="899" y="432" width="8" height="15" fill="#3a3a3a"/>
<!-- overhead guard -->
<path d="M903.5 505 Q904 458 929 428 L934 431 Q911 460 910 505 Z" fill="#333"/>
<path d="M912 505 Q913 462 935 432 L940 435 Q919 464 917.5 505 Z" fill="#3a3a3a"/>
<path d="M927 430 Q930 420 950 418 L990 415.5 Q997 416 996 424 L994 432 Q991 437 984 437.5 L945 440 L935 437 Z" fill="#c4c4c4"/>
<path d="M927 430 Q930 420 950 418 L990 415.5 Q997 416 996 424 L994 432 Q991 437 984 437.5 L945 440 L935 437 Z" fill="none" stroke="#333" stroke-width="2.6"/>
<path d="M936 424 Q960 420 985 420 M939 428.5 Q962 425 985 425.5 M942 433 Q964 430 985 431" stroke="#3a3a3a" stroke-width="1.6" fill="none"/>
<rect x="978.4" y="421" width="5" height="82" fill="#474747"/>
<rect x="978.4" y="421" width="1.5" height="82" fill="#9a9a9a"/>
<!-- seat and stuff -->
<path d="M957 501 Q958 485 970 484 L978 484 L978 501 Z" fill="#3a3a3a"/>
<rect x="927" y="494.5" width="30" height="8" fill="#6d6455"/>
<!-- body -->
<path d="M884.8 558 Q886 530 893 518 Q898 508 910 505.5 L986 503.5 Q990 504 990 510 L990 570 L884.8 570 Z" fill="#d9cfbb"/>
<rect x="975" y="505" width="15" height="65" fill="#cbbfa8"/>
<path d="M897 522 h9 v2.5 h-9z M897 526.5 h9 v2.5 h-9z M897 531 h9 v2.5 h-9z" fill="#2a2a2a"/>
<rect x="912" y="519.6" width="34" height="6.8" fill="#2a2a2a"/>
<rect x="911" y="526" width="1" height="40" fill="#b8ae9a"/>
<text x="952" y="521" font-family="Liberation Sans" font-size="7" font-weight="bold" fill="#4a4a4a" letter-spacing="0.3">CROWN</text>
<!-- base -->
<path d="M876.4 558.6 L939 561 Q950 563 959 569.6 L990 569.6 L990 585 Q988 591 976 591.6 L895 588 L871 578 Z" fill="#1e1e1e"/>
<rect x="861" y="542.5" width="13.5" height="15" fill="#2a2a2a"/>
<circle cx="881.4" cy="574.7" r="13.5" fill="#262626"/>
<circle cx="881.4" cy="574.7" r="6.5" fill="#6e6e6e"/>
<circle cx="881.4" cy="574.7" r="3" fill="#404040"/>
<rect x="928" y="567" width="6" height="3" fill="#8a8a7a"/>

<g transform="translate(633 254.5)"><clipPath id="c1"><rect width="143" height="95"/></clipPath><g clip-path="url(#c1)">
<rect width="143" height="95" fill="#414c56"/>
<rect x="0" y="0" width="10" height="40" fill="#2e3439"/>
<path d="M0 12 Q6 14 7 22 L4 24 Q3 18 0 17Z" fill="#c0c2c4"/>
<path d="M1 26 L5 38" stroke="#9a9a9a" stroke-width="1.5"/>
<rect x="50" y="0" width="55" height="41" fill="#4a5660"/>
<rect x="68" y="0" width="3" height="41" fill="#5d6c78"/>
<rect x="104" y="0" width="14" height="26" fill="#c6cacd"/>
<rect x="104" y="26" width="14" height="15" fill="#1a1c1e"/>
<rect x="118" y="0" width="25" height="41" fill="#a4a8ab"/>
<rect x="120" y="26" width="9" height="14" fill="#dcdcdc"/>
<rect x="0" y="40" width="143" height="15" fill="#9d9d9b"/>
<rect x="0" y="40" width="50" height="15" fill="#8e8e8c"/>
<rect x="0" y="55" width="143" height="27" fill="#c2c2c0"/>
<rect x="58" y="57" width="58" height="24" fill="#d8d8d6"/>
<polygon points="8.8,0 49,0 55.6,82.6 37,82.6" fill="#5e6266"/>
<polygon points="8.8,0 18,0 42,82.6 37,82.6" fill="#3a3d40"/>
<polygon points="125,0 143,0 143,50 128,82.6 112,82.6" fill="#6a6e72"/>
<polygon points="138,0 143,0 143,50 132,82.6 128,82.6" fill="#404346"/>
<rect x="133" y="50" width="10" height="32" fill="#cfcfcb"/>
<rect x="0" y="82.6" width="143" height="12.4" fill="#161616"/>
<rect x="30" y="85" width="25" height="6" fill="#3c3a36"/><rect x="62" y="85" width="20" height="6" fill="#5a4e36"/><rect x="82" y="86" width="15" height="4" fill="#4a4a48"/>
<circle cx="64.5" cy="50.5" r="2.6" fill="none" stroke="#4a4a4a" stroke-width="1.3"/>
<circle cx="91" cy="50.5" r="2.6" fill="none" stroke="#7a7a7a" stroke-width="1.2"/>
</g></g><g transform="translate(822 254)"><clipPath id="c2"><rect width="143" height="94"/></clipPath><g clip-path="url(#c2)">
<rect width="143" height="94" fill="#5e6062"/>
<rect x="0" y="0" width="8" height="70" fill="#2a2c2e"/>
<rect x="0" y="0" width="9" height="6" fill="#a09070"/>
<rect x="0" y="22" width="8" height="1.5" fill="#777"/><rect x="0" y="42" width="8" height="1.5" fill="#777"/>
<rect x="8" y="4" width="6" height="58" fill="#a8aaac"/>
<rect x="14" y="0" width="22" height="62" fill="#5c5e60"/>
<path d="M20 5 Q34 20 28 62" stroke="#8a8c8e" stroke-width="1.5" fill="none"/>
<polygon points="36,0 56,0 50,56 38,58" fill="#8c8e90"/>
<polygon points="56,0 64,0 56,56 50,56" fill="#2e3032"/>
<polygon points="64,0 96,0 80,54 62,56" fill="#7a7c7e"/>
<polygon points="73,0 78,0 70,54 66,54" fill="#3a3c3e"/>
<rect x="62" y="8" width="22" height="5" fill="#4a4c4e"/>
<polygon points="96,0 104,0 86,54 80,54" fill="#2e3032"/>
<polygon points="104,0 143,0 143,38 112,60 86,56" fill="#7e8082"/>
<polygon points="112,0 118,0 92,54 88,54" fill="#3a3c3e"/>
<polygon points="124,0 131,0 104,54 98,54" fill="#333537"/>
<polygon points="136,6 143,8 143,18 110,58 106,56" fill="#3e4042"/>
<rect x="128" y="42" width="15" height="24" fill="#5e5648"/>
<rect x="0" y="62" width="36" height="17" fill="#c8c8c6"/>
<polygon points="36,52 82,50 110,42 118,56 116,78 36,80" fill="#b6b6b2"/>
<rect x="45" y="60" width="55" height="8" fill="#d0d0cc"/>
<circle cx="60" cy="58" r="3" fill="#dcdcda"/><circle cx="86" cy="60" r="3" fill="#d8d8d8"/><circle cx="107" cy="64" r="3" fill="#c8c8c8"/>
<rect x="129" y="66" width="14" height="24" fill="#d6d6d6"/>
<rect x="0" y="79" width="143" height="15" fill="#363636"/>
<rect x="30" y="81" width="60" height="6" fill="#7a7a76"/>
<rect x="95" y="84" width="30" height="6" fill="#5a5a5a"/>
<rect x="4" y="68" width="16" height="26" fill="#262626"/>
<rect x="117" y="68" width="12" height="24" fill="#323232"/>
</g></g><g transform="translate(1014 253)"><clipPath id="c3"><rect width="143" height="107"/></clipPath><g clip-path="url(#c3)">
<rect width="143" height="107" fill="#dedad0"/>
<rect x="0" y="0" width="30" height="16" fill="#c0b088"/>
<rect x="0" y="16" width="30" height="3" fill="#a89060"/>
<rect x="0" y="40" width="30" height="50" fill="#e6e4da"/>
<rect x="0" y="58" width="30" height="3" fill="#b0a070"/>
<rect x="0" y="88" width="30" height="4" fill="#c8b070"/>
<rect x="5" y="0" width="7" height="107" fill="#b2b2b0"/>
<polygon points="10,0 26,0 37,64 31,64" fill="#bcbcba"/>
<rect x="29" y="0" width="5" height="107" fill="#a6a6a6"/>
<rect x="34" y="0" width="16" height="107" fill="#444648"/>
<rect x="40" y="0" width="2" height="107" fill="#6a6c6e"/>
<rect x="50" y="0" width="44" height="107" fill="#4c4e50"/>
<rect x="58" y="0" width="2" height="107" fill="#6b6d6f"/>
<rect x="93" y="0" width="16" height="107" fill="#8a8c8e"/>
<rect x="108" y="0" width="10" height="107" fill="#2f3133"/>
<rect x="118" y="0" width="11" height="107" fill="#838587"/>
<rect x="129" y="0" width="14" height="107" fill="#dcd8c8"/>
<rect x="129" y="4" width="14" height="7" fill="#c8b070"/>
<rect x="129" y="42" width="14" height="10" fill="#c8b888"/>
<rect x="129" y="72" width="14" height="35" fill="#a8a49a"/>
<rect x="0" y="84" width="60" height="2.5" fill="#7a7a7a"/>
<ellipse cx="20" cy="103" rx="17" ry="13" fill="#2c2c2c"/>
<ellipse cx="31" cy="104" rx="7" ry="11" fill="#4a4a4a"/>
<rect x="52" y="12" width="3" height="6" fill="#9a9a9a"/><rect x="52" y="67" width="3" height="6" fill="#9a9a9a"/>
</g></g><g transform="translate(633 414)"><clipPath id="c4"><rect width="143" height="95"/></clipPath><g clip-path="url(#c4)">
<rect width="143" height="95" fill="#2c3139"/>
<rect x="0" y="0" width="143" height="31" fill="#c4c8cc"/>
<rect x="0" y="0" width="60" height="31" fill="#ccd0d4"/>
<ellipse cx="46" cy="12" rx="6" ry="4" fill="#e0e2e4"/>
<circle cx="16" cy="3" r="1.5" fill="#555"/><circle cx="20" cy="25" r="1.5" fill="#666"/>
<rect x="0" y="31" width="143" height="32" fill="#2a2f37"/>
<rect x="0" y="44" width="143" height="3" fill="#20242a"/>
<rect x="0" y="62" width="70" height="33" fill="#8e9294"/>
<rect x="0" y="62" width="20" height="33" fill="#b0b4b6"/>
<rect x="30" y="66" width="24" height="14" fill="#3c3c3a"/>
<rect x="48" y="84" width="18" height="11" fill="#c8c8c8"/>
<rect x="70" y="62" width="64" height="33" fill="#23272b"/>
<ellipse cx="95" cy="80" rx="26" ry="10" fill="#1a1d20"/>
<rect x="100" y="78" width="14" height="6" fill="#d8d8d8"/>
<rect x="92" y="92" width="20" height="3" fill="#4060a8"/>
<rect x="89" y="31" width="5" height="62" fill="#aea68e"/>
<rect x="103" y="31" width="5" height="62" fill="#a69e88"/>
<rect x="134" y="0" width="9" height="95" fill="#22262a"/>
<circle cx="27" cy="69" r="3" fill="#2c9a5a"/>
</g></g><g transform="translate(1014 443)"><clipPath id="c6"><rect width="143" height="95"/></clipPath><g clip-path="url(#c6)">
<rect width="143" height="95" fill="#868c92"/>
<rect x="0" y="55" width="25" height="40" fill="#74828e"/>
<rect x="88" y="22" width="21" height="73" fill="#c2bcae"/>
<rect x="92" y="60" width="14" height="20" fill="#a8a090"/>
<polygon points="0,0 143,0 143,10 108.5,24.8 53,6.7 0,21" fill="#4f5761"/>
<polygon points="0,21 53,6.7 60,12 20,28 0,30" fill="#5e666e"/>
<rect x="0" y="30" width="18" height="25" fill="#707880"/>
<circle cx="9" cy="42" r="6" fill="#5a6066"/>
<rect x="30" y="20" width="18" height="30" fill="#8a9096"/>
<rect x="50.4" y="12" width="11" height="83" fill="#b4b8bc"/>
<rect x="53" y="12" width="2" height="83" fill="#8a8e92"/>
<rect x="61.3" y="20" width="22" height="75" fill="#80868c"/>
<rect x="66" y="55" width="7" height="40" fill="#9ea2a6"/>
<rect x="83" y="22" width="6" height="73" fill="#b0b4b8"/>
<rect x="25" y="52.6" width="36.3" height="8.4" fill="#dcdcdc"/>
<rect x="26" y="61" width="11" height="34" fill="#b8bcc0"/>
<rect x="40" y="61" width="4" height="34" fill="#5a6068"/>
<rect x="46" y="61" width="3" height="34" fill="#a0a4a8"/>
<circle cx="69.8" cy="24.8" r="9" fill="#4a4a4a"/>
<circle cx="69.8" cy="24.8" r="5.5" fill="#8a8a8a"/>
<circle cx="73.4" cy="45.4" r="6.7" fill="#4a4a4a"/>
<circle cx="73.4" cy="45.4" r="3.8" fill="#8e8e8e"/>
<rect x="108.5" y="0" width="34.5" height="95" fill="#a0aebc"/>
<rect x="106" y="20" width="6" height="75" fill="#4e5862"/>
<rect x="112" y="0" width="5" height="95" fill="#aab8c6"/>
<rect x="99" y="0" width="9" height="12" fill="#c8b898"/>
</g></g><g transform="translate(634 602)"><clipPath id="c7"><rect width="142" height="153"/></clipPath><g clip-path="url(#c7)">
<rect width="142" height="153" fill="#4d5157"/>
<rect x="0" y="0" width="18" height="80" fill="#25282c"/>
<rect x="2" y="10" width="10" height="4" fill="#c0c0c0"/><rect x="4" y="30" width="12" height="3" fill="#aaa"/><rect x="2" y="55" width="8" height="3" fill="#bbb"/>
<rect x="0" y="80" width="18" height="30" fill="#3a3c40"/>
<ellipse cx="12" cy="135" rx="16" ry="25" fill="#8a8a88"/>
<rect x="42" y="0" width="10" height="100" fill="#6f747a"/>
<rect x="56" y="0" width="8" height="80" fill="#8a8e93"/>
<rect x="70" y="0" width="7" height="70" fill="#3a3d42"/>
<rect x="92" y="0" width="8" height="60" fill="#7a7e84"/>
<rect x="108" y="0" width="6" height="40" fill="#6a6e74"/>
<rect x="122" y="0" width="10" height="40" fill="#555a60"/>
<rect x="80" y="8" width="6" height="30" fill="#a87a3a"/>
<polygon points="63.5,153 142,153 142,30 124,33 108,112 63.5,132" fill="#c7bf98"/>
<polygon points="130,30 142,28 142,100 132,120" fill="#d2caa2"/>
<polygon points="18,105 105,65 112,85 25,130" fill="#2e3236"/>
<polygon points="25,118 100,80 102,90 28,125" fill="#3e4246"/>
<rect x="60" y="100" width="22" height="10" fill="#8a8070"/>
<polygon points="60,95 70,150 90,150 62,88" fill="#3a3e42"/>
<rect x="18" y="0" width="20" height="153" fill="#8f9398"/>
<rect x="20" y="0" width="3" height="153" fill="#a8acb0"/>
<rect x="109" y="40" width="15" height="75" fill="#3c4045"/>
<polygon points="106,108 142,122 142,132 104,118" fill="#2c3034"/>
</g></g><g transform="translate(826 632.5)"><clipPath id="c8"><rect width="143" height="125"/></clipPath><g clip-path="url(#c8)">
<rect width="143" height="125" fill="#d9c9b0"/>
<rect x="0" y="0" width="143" height="3" fill="#cdb898"/>
<path d="M17.3 3.4 H123.9 V11.3 H131.8 V24 H139.7 V56.3 H133.4 L132.5 121.8 Q90 119 59 117 Q25 112 3.9 106 L7 56.3 H4.7 V24 H11 V11.3 H17.3 Z" fill="#434a54"/>
<rect x="56.8" y="12.9" width="26" height="22" fill="#4e545c"/>
<rect x="36.3" y="37.3" width="70.2" height="7.1" fill="#6e7070"/>
<circle cx="69.4" cy="23.9" r="6.5" fill="#8a8a86"/>
<circle cx="69.4" cy="23.9" r="2.5" fill="#3a3a3a"/>
<rect x="25" y="11.5" width="12" height="2" fill="#9a9a92"/><rect x="48" y="11.5" width="10" height="2" fill="#8a8a84"/><rect x="103" y="11.5" width="13" height="2" fill="#9a9a92"/>
<rect x="20" y="18" width="30" height="1.5" fill="#6a6e72"/><rect x="86" y="18" width="40" height="1.5" fill="#6a6e72"/>
<rect x="18" y="28" width="5" height="18" fill="#363c44"/><rect x="116" y="28" width="5" height="18" fill="#363c44"/>
<rect x="127" y="24" width="12.7" height="32.3" fill="#5a6068"/>
<rect x="4.7" y="24" width="4" height="32.3" fill="#525860"/>
<path d="M48.9 85.5 Q46 66 69.8 65 Q93 66 90.7 84 Q70 86.5 48.9 85.5 Z" fill="#d8c8a8"/>
<path d="M3.9 100 Q40 108 132.6 112 L132.5 121.8 Q90 119 59 117 Q25 112 3.9 106Z" fill="#383e46"/>
<circle cx="38" cy="90" r="3" fill="#3a4048"/><circle cx="50" cy="93" r="2" fill="#3a4048"/>
</g></g><g transform="translate(1014 637)"><clipPath id="c9"><rect width="143" height="106"/></clipPath><g clip-path="url(#c9)">
<rect width="143" height="106" fill="#6e5e40"/>
<rect x="60" y="10" width="30" height="60" fill="#776646"/>
<path d="M2 3 Q10 0 11 8 L24 78 L26 100 L19 100 L16 78 L3 10 Z" fill="#8a9096"/>
<polygon points="11,0 46,0 54,100 25,100" fill="#3e4a54"/>
<polygon points="16,0 24,0 36,100 31,100" fill="#5c6a76"/>
<polygon points="30,0 36,0 46,100 42,100" fill="#56636e"/>
<polygon points="40,0 44,0 52,100 49,100" fill="#677380"/>
<rect x="55.7" y="0" width="20.8" height="100" fill="#3c424a"/>
<rect x="58" y="5" width="4" height="90" fill="#7a8088"/>
<rect x="68" y="8" width="5.7" height="90" fill="#b6b8ba"/>
<rect x="76.5" y="0" width="13.5" height="8" fill="#a0a4a8"/>
<rect x="90" y="0" width="8.7" height="100" fill="#cfd0d0"/>
<rect x="92" y="0" width="2" height="100" fill="#6a6e72"/>
<polygon points="98.7,0 119.5,0 111,100 91.7,100" fill="#424e58"/>
<polygon points="103,0 108,0 98,100 95,100" fill="#5e6a74"/>
<path d="M119.5 0 L132 1 Q140 4 139 14 L138 78 L126.4 100 L121 100 L129 78 L130 14 Q130 8 124 8 Z" fill="#8a9096"/>
<rect x="53" y="68.5" width="76" height="7" fill="#6a7078"/>
<rect x="110" y="78" width="11" height="24" fill="#2e3238"/>
<rect x="112" y="86" width="7" height="4" fill="#c8c0a8"/>
<rect x="24" y="81" width="9" height="21" fill="#3a3e44"/>
<rect x="0" y="100" width="143" height="6" fill="#8a9098"/>
<rect x="68" y="101" width="10" height="4" fill="#c0b8a0"/>
</g></g>
<g><line x1="698" y1="306" x2="876" y2="528" stroke="#303030" stroke-width="1.25"/><line x1="887.7" y1="351.5" x2="877.4" y2="513" stroke="#303030" stroke-width="1.25"/><line x1="890.5" y1="426.4" x2="1009.5" y2="486.7" stroke="#303030" stroke-width="1.25"/><line x1="777.2" y1="466" x2="874.2" y2="532" stroke="#303030" stroke-width="1.25"/><line x1="777.7" y1="678.7" x2="867" y2="548" stroke="#303030" stroke-width="1.25"/><line x1="910.2" y1="630" x2="937.4" y2="575.5" stroke="#303030" stroke-width="1.25"/><line x1="893" y1="502" x2="1013.6" y2="636.5" stroke="#303030" stroke-width="1.25"/></g>
<g clip-path="url(#phc)"><line x1="698" y1="306" x2="876" y2="528" stroke="#1a1a1a" stroke-width="2.5"/><line x1="887.7" y1="351.5" x2="877.4" y2="513" stroke="#1a1a1a" stroke-width="2.5"/><line x1="890.5" y1="426.4" x2="1009.5" y2="486.7" stroke="#1a1a1a" stroke-width="2.5"/><line x1="777.2" y1="466" x2="874.2" y2="532" stroke="#1a1a1a" stroke-width="2.5"/><line x1="777.7" y1="678.7" x2="867" y2="548" stroke="#1a1a1a" stroke-width="2.5"/><line x1="910.2" y1="630" x2="937.4" y2="575.5" stroke="#1a1a1a" stroke-width="2.5"/><line x1="893" y1="502" x2="1013.6" y2="636.5" stroke="#1a1a1a" stroke-width="2.5"/><line x1="698" y1="306" x2="876" y2="528" stroke="#ffffff" stroke-width="0.9"/><line x1="887.7" y1="351.5" x2="877.4" y2="513" stroke="#ffffff" stroke-width="0.9"/><line x1="890.5" y1="426.4" x2="1009.5" y2="486.7" stroke="#ffffff" stroke-width="0.9"/><line x1="777.2" y1="466" x2="874.2" y2="532" stroke="#ffffff" stroke-width="0.9"/><line x1="777.7" y1="678.7" x2="867" y2="548" stroke="#ffffff" stroke-width="0.9"/><line x1="910.2" y1="630" x2="937.4" y2="575.5" stroke="#ffffff" stroke-width="0.9"/><line x1="893" y1="502" x2="1013.6" y2="636.5" stroke="#ffffff" stroke-width="0.9"/></g>
<g><line x1="877.8" y1="241.4" x2="862.6" y2="295.2" stroke="#222" stroke-width="2.3"/><line x1="879.4" y1="241.4" x2="872.3" y2="305" stroke="#222" stroke-width="2.3"/><line x1="979.6" y1="287.9" x2="907" y2="313" stroke="#222" stroke-width="2.3"/><line x1="1105.5" y1="237.7" x2="1087.1" y2="288.5" stroke="#222" stroke-width="2.3"/><line x1="1103.6" y1="424.7" x2="1075.6" y2="457.3" stroke="#222" stroke-width="2.3"/><line x1="1101.7" y1="424.7" x2="1085.1" y2="475" stroke="#222" stroke-width="2.3"/><line x1="1071.7" y1="552" x2="1086.5" y2="515.5" stroke="#222" stroke-width="2.3"/><line x1="1122" y1="550.6" x2="1091.4" y2="488.8" stroke="#222" stroke-width="2.3"/><line x1="707.4" y1="513" x2="696" y2="479.2" stroke="#222" stroke-width="2.3"/><line x1="725.2" y1="588" x2="701.8" y2="673.4" stroke="#222" stroke-width="2.3"/><line x1="714" y1="771" x2="684.5" y2="655" stroke="#222" stroke-width="2.3"/><line x1="714" y1="771" x2="723" y2="619" stroke="#222" stroke-width="2.3"/><line x1="714" y1="771" x2="757.8" y2="710.8" stroke="#222" stroke-width="2.3"/><line x1="1066.9" y1="616.3" x2="1084.7" y2="662.6" stroke="#222" stroke-width="2.3"/><line x1="1122.8" y1="614.3" x2="1117.2" y2="662.6" stroke="#222" stroke-width="2.3"/><line x1="1105.8" y1="755.5" x2="1097" y2="729" stroke="#222" stroke-width="2.3"/><line x1="1030.3" y1="764.7" x2="1043.5" y2="690" stroke="#222" stroke-width="2.3"/><line x1="877.8" y1="241.4" x2="862.6" y2="295.2" stroke="#fff" stroke-width="0.75"/><line x1="879.4" y1="241.4" x2="872.3" y2="305" stroke="#fff" stroke-width="0.75"/><line x1="979.6" y1="287.9" x2="907" y2="313" stroke="#fff" stroke-width="0.75"/><line x1="1105.5" y1="237.7" x2="1087.1" y2="288.5" stroke="#fff" stroke-width="0.75"/><line x1="1103.6" y1="424.7" x2="1075.6" y2="457.3" stroke="#fff" stroke-width="0.75"/><line x1="1101.7" y1="424.7" x2="1085.1" y2="475" stroke="#fff" stroke-width="0.75"/><line x1="1071.7" y1="552" x2="1086.5" y2="515.5" stroke="#fff" stroke-width="0.75"/><line x1="1122" y1="550.6" x2="1091.4" y2="488.8" stroke="#fff" stroke-width="0.75"/><line x1="707.4" y1="513" x2="696" y2="479.2" stroke="#fff" stroke-width="0.75"/><line x1="725.2" y1="588" x2="701.8" y2="673.4" stroke="#fff" stroke-width="0.75"/><line x1="714" y1="771" x2="684.5" y2="655" stroke="#fff" stroke-width="0.75"/><line x1="714" y1="771" x2="723" y2="619" stroke="#fff" stroke-width="0.75"/><line x1="714" y1="771" x2="757.8" y2="710.8" stroke="#fff" stroke-width="0.75"/><line x1="1066.9" y1="616.3" x2="1084.7" y2="662.6" stroke="#fff" stroke-width="0.75"/><line x1="1122.8" y1="614.3" x2="1117.2" y2="662.6" stroke="#fff" stroke-width="0.75"/><line x1="1105.8" y1="755.5" x2="1097" y2="729" stroke="#fff" stroke-width="0.75"/><line x1="1030.3" y1="764.7" x2="1043.5" y2="690" stroke="#fff" stroke-width="0.75"/></g>
<g font-family="Liberation Sans" font-size="12.4" fill="#111" stroke="#111" stroke-width="0.25"><text transform="translate(698.42 366.6) scale(0.975 1)">L-5</text><text transform="translate(869.63 236.8) scale(0.968 1)">I-13</text><text transform="translate(983.69 292) scale(0.905 1)">I-14</text><text transform="translate(1083.83 231.7) scale(0.874 1)">I-15, L–6</text><text transform="translate(696.73 525.4) scale(0.968 1)">I-12</text><text transform="translate(1094.42 420.4) scale(0.979 1)">I-15</text><text transform="translate(1061.23 563.8) scale(0.968 1)">I-16</text><text transform="translate(1113.75 563.8) scale(0.953 1)">I-22</text><text transform="translate(718.16 580.1) scale(0.939 1)">I-11</text><text transform="translate(703.84 786.6) scale(0.958 1)">I-10</text><text transform="translate(890.12 773.7) scale(0.879 1)">I-21</text><text transform="translate(1044.23 610.4) scale(0.874 1)">I-17, L–7</text><text transform="translate(1118.07 608) scale(0.932 1)">I-18</text><text transform="translate(1100.99 771.8) scale(1.005 1)">I-19</text><text transform="translate(1018.74 777.8) scale(0.963 1)">I-20</text></g>
</svg><!-- DOC END -->
</body></html>
